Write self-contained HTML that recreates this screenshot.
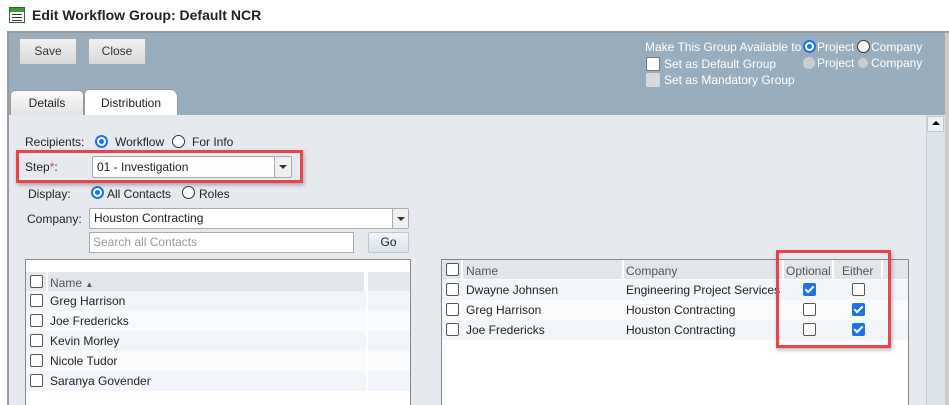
<!DOCTYPE html>
<html><head><style>
*{box-sizing:border-box;margin:0;padding:0}
html,body{width:949px;height:405px;overflow:hidden}
body{background:#fff;font-family:"Liberation Sans",sans-serif;font-size:12px;color:#222;position:relative}
.a{position:absolute}
.cb{position:absolute;width:13px;height:13px;border:1px solid #555;border-radius:2px;background:#fff}
.ck{position:absolute;width:13px;height:13px;border-radius:2px;background:#1a73e8}
.ck:after{content:"";position:absolute;left:4px;top:1px;width:3px;height:7px;border:solid #fff;border-width:0 2px 2px 0;transform:rotate(45deg)}
.rad{position:absolute;width:13px;height:13px;border-radius:50%;border:1px solid #333;background:#fff}
.rad.on{border:2px solid #1a73e8}
.rad.on:after{content:"";position:absolute;left:2px;top:2px;width:5px;height:5px;border-radius:50%;background:#1a73e8}
.btn{position:absolute;border:1px solid #aaa;background:linear-gradient(#f2f2f2,#d8d8d8);text-align:center;line-height:24px;color:#333}
.sel{position:absolute;background:#fff;border:1px solid #aaa;border-radius:2px;padding-left:4px;line-height:19px}
.sel .dd{position:absolute;right:0;top:0;bottom:0;width:16px;border-left:1px solid #aaa;background:#f0f0f0}
.sel .dd:after{content:"";position:absolute;left:4px;top:8px;border:4px solid transparent;border-top:4px solid #333;border-bottom:0}
.row{position:absolute;height:20px;line-height:20px}
</style></head><body>
<div class="a" style="left:9px;top:7px;width:16px;height:16px;border:1px solid #2a6a2a;background:#fff"><div style="height:4px;background:#3b9a3b"></div><div style="margin:2px 2px;height:1px;background:#333"></div><div style="margin:2px 2px;height:1px;background:#333"></div><div style="margin:2px 2px;height:1px;background:#333"></div></div>
<div class="a" style="left:32px;top:7px;font-size:14px;font-weight:bold;color:#222">Edit Workflow Group: Default NCR</div>
<div class="a" style="left:7px;top:31px;width:942px;height:374px;border-left:2px solid #999;border-top:2px solid #999;background:#e6eaef"></div>
<div class="a" style="left:9px;top:33px;width:936px;height:82px;background:#98adbd"></div>
<div class="a" style="left:945px;top:33px;width:4px;height:372px;background:#ccc"></div>
<div class="btn" style="left:19px;top:38px;width:58px;height:27px">Save</div>
<div class="btn" style="left:88px;top:38px;width:58px;height:27px">Close</div>
<div class="a" style="left:645px;top:40px;color:#fff">Make This Group Available to</div>
<div class="rad on" style="left:803px;top:40px"></div><div class="a" style="left:817px;top:40px;color:#fff">Project</div>
<div class="rad" style="left:857px;top:40px"></div><div class="a" style="left:871px;top:40px;color:#fff">Company</div>
<div class="a" style="left:646px;top:57px;width:14px;height:14px;background:#fff;border:1px solid #777;border-radius:2px"></div><div class="a" style="left:664px;top:57px;color:#fff">Set as Default Group</div>
<div class="a" style="left:803px;top:57px;width:12px;height:12px;border-radius:50%;background:#c8cdd2"></div><div class="a" style="left:817px;top:56px;color:#fff">Project</div>
<div class="a" style="left:857px;top:57px;width:12px;height:12px;border-radius:50%;background:#c8cdd2;border:1px solid #aaa"></div><div class="a" style="left:871px;top:56px;color:#fff">Company</div>
<div class="a" style="left:646px;top:73px;width:14px;height:14px;background:#d6dbe0;border-radius:2px"></div><div class="a" style="left:664px;top:73px;color:#fff">Set as Mandatory Group</div>
<div class="a" style="left:10px;top:90px;width:74px;height:25px;background:linear-gradient(#fafafa,#e4e4e4);border:1px solid #999;border-bottom:0;border-radius:5px 5px 0 0;text-align:center;line-height:24px">Details</div>
<div class="a" style="left:84px;top:89px;width:94px;height:26px;background:#fff;border:1px solid #999;border-bottom:0;border-radius:5px 8px 0 0;text-align:center;line-height:26px">Distribution</div>
<div class="a" style="left:926px;top:115px;width:19px;height:290px;background:#dde3ea;border-left:1px solid #ccd"></div>
<div class="a" style="left:927px;top:116px;width:17px;height:16px;background:#eef1f4;border:1px solid #bcc"></div>
<div class="a" style="left:932px;top:121px;border:4px solid transparent;border-bottom:4px solid #000;border-top:0"></div>
<div class="a" style="left:25px;top:135px">Recipients:</div>
<div class="rad on" style="left:95px;top:135px"></div><div class="a" style="left:115px;top:135px">Workflow</div>
<div class="rad" style="left:172px;top:135px"></div><div class="a" style="left:192px;top:135px">For Info</div>
<div class="a" style="left:16px;top:150px;width:287px;height:33px;border:3px solid #e8454a;box-shadow:1px 2px 4px rgba(0,0,0,.3)"></div>
<div class="a" style="left:25px;top:160px">Step<span style="color:#e33">*</span>:</div>
<div class="sel" style="left:92px;top:156px;width:200px;height:22px;line-height:20px">01 - Investigation<div class="dd" style="width:17px"></div></div>
<div class="a" style="left:28px;top:187px">Display:</div>
<div class="rad on" style="left:91px;top:186px"></div><div class="a" style="left:107px;top:187px">All Contacts</div>
<div class="rad" style="left:182px;top:186px"></div><div class="a" style="left:199px;top:187px">Roles</div>
<div class="a" style="left:27px;top:212px">Company:</div>
<div class="sel" style="left:89px;top:208px;width:320px;height:21px">Houston Contracting<div class="dd"></div></div>
<div class="a" style="left:89px;top:232px;width:265px;height:21px;background:#fff;border:1px solid #aaa;color:#999;padding-left:3px;line-height:19px">Search all Contacts</div>
<div class="a" style="left:368px;top:232px;width:41px;height:21px;background:linear-gradient(#f4f6f9,#d8e2ec);border:1px solid #bcc7d3;border-radius:2px;text-align:center;line-height:19px">Go</div>
<div class="a" style="left:25px;top:259px;width:386px;height:146px;background:#fff;border:1px solid #888;border-bottom:0"></div>
<div class="a" style="left:26px;top:272px;width:384px;height:19px;background:#e6eaef"></div>
<div class="a" style="left:46px;top:272px;width:320px;height:19px;background:#e1e6eb;border-right:2px solid #fff;border-left:2px solid #fff"></div>
<div class="cb" style="left:30px;top:275px"></div><div class="a" style="left:50px;top:276px;color:#555">Name <span style="font-size:8px">▲</span></div>
<div class="row" style="left:26px;top:291px;width:384px;background:#f2f6fa"><div class="cb" style="left:4px;top:3px"></div><span style="position:absolute;left:24px">Greg Harrison</span></div>
<div class="row" style="left:26px;top:311px;width:384px;background:#fafbfc"><div class="cb" style="left:4px;top:3px"></div><span style="position:absolute;left:24px">Joe Fredericks</span></div>
<div class="row" style="left:26px;top:331px;width:384px;background:#f2f6fa"><div class="cb" style="left:4px;top:3px"></div><span style="position:absolute;left:24px">Kevin Morley</span></div>
<div class="row" style="left:26px;top:351px;width:384px;background:#fafbfc"><div class="cb" style="left:4px;top:3px"></div><span style="position:absolute;left:24px">Nicole Tudor</span></div>
<div class="row" style="left:26px;top:371px;width:384px;background:#f2f6fa"><div class="cb" style="left:4px;top:3px"></div><span style="position:absolute;left:24px">Saranya Govender</span></div>
<div class="a" style="left:366px;top:272px;width:2px;height:120px;background:#fff"></div>
<div class="a" style="left:441px;top:259px;width:468px;height:146px;background:#fff;border:1px solid #888;border-bottom:0"></div>
<div class="a" style="left:442px;top:260px;width:466px;height:19px;background:#e1e6eb"></div>
<div class="a" style="left:461px;top:260px;width:2px;height:80px;background:#fff"></div>
<div class="a" style="left:622px;top:260px;width:2px;height:80px;background:#fff"></div>
<div class="a" style="left:782px;top:260px;width:2px;height:80px;background:#fff"></div>
<div class="a" style="left:832px;top:260px;width:2px;height:80px;background:#fff"></div>
<div class="a" style="left:881px;top:260px;width:2px;height:80px;background:#fff"></div>
<div class="cb" style="left:446px;top:263px"></div>
<div class="a" style="left:466px;top:264px;color:#555">Name</div>
<div class="a" style="left:626px;top:264px;color:#555">Company</div>
<div class="a" style="left:786px;top:264px;color:#555">Optional</div>
<div class="a" style="left:842px;top:264px;color:#555">Either</div>
<div class="row" style="left:442px;top:280px;width:466px;background:#f2f6fa"><div class="cb" style="left:4px;top:3px"></div><span style="position:absolute;left:24px">Dwayne Johnsen</span><span style="position:absolute;left:184px">Engineering Project Services</span><div class="ck" style="left:361px;top:3px"></div><div class="cb" style="left:410px;top:3px"></div></div>
<div class="row" style="left:442px;top:300px;width:466px;background:#fafbfc"><div class="cb" style="left:4px;top:3px"></div><span style="position:absolute;left:24px">Greg Harrison</span><span style="position:absolute;left:184px">Houston Contracting</span><div class="cb" style="left:361px;top:3px"></div><div class="ck" style="left:410px;top:3px"></div></div>
<div class="row" style="left:442px;top:320px;width:466px;background:#f2f6fa"><div class="cb" style="left:4px;top:3px"></div><span style="position:absolute;left:24px">Joe Fredericks</span><span style="position:absolute;left:184px">Houston Contracting</span><div class="cb" style="left:361px;top:3px"></div><div class="ck" style="left:410px;top:3px"></div></div>
<div class="a" style="left:776px;top:250px;width:115px;height:98px;border:3px solid #e8454a;box-shadow:1px 2px 4px rgba(0,0,0,.3)"></div>
</body></html>
